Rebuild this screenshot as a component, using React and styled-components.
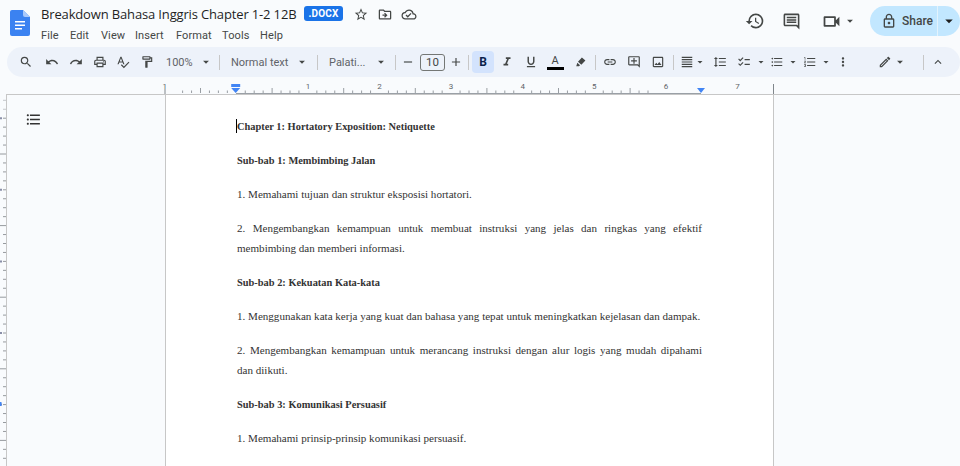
import React from 'react';
import styled, { createGlobalStyle } from 'styled-components';
import {
    MdSearch, MdUndo, MdRedo, MdOutlinePrint, MdOutlineSpellcheck, MdOutlineFormatPaint,
    MdOutlineStarBorder, MdOutlineDriveFileMove, MdOutlineCloudDone, MdHistory,
    MdOutlineVideocam, MdOutlineLock, MdFormatItalic, MdFormatUnderlined, MdOutlineLink,
    MdOutlineAddComment, MdOutlineImage, MdFormatAlignJustify, MdFormatLineSpacing,
    MdChecklist, MdFormatListBulleted, MdFormatListNumbered, MdMoreVert, MdOutlineEdit,
    MdExpandLess, MdArrowDropDown, MdAdd, MdRemove, MdOutlineComment,
} from 'react-icons/md';

const GlobalStyle = createGlobalStyle`
    html, body {
        margin: 0;
        height: 466px;
        overflow: hidden;
        background: #f9fbfd;
        font-family: Roboto, "Liberation Sans", sans-serif;
        color: #444746;
    }
`;

const Shell = styled.div`
    width: 960px;
    height: 466px;
    display: flex;
    flex-direction: column;
    overflow: hidden;
`;

const Header = styled.header`
    height: 47px;
    flex: none;
    display: flex;
    padding-left: 10px;
`;

const Logo = styled.svg`
    width: 20px;
    height: 26px;
    margin-top: 10px;
    flex: none;
`;

const TitleBlock = styled.div`
    margin-left: 11px;
    padding-top: 5px;
`;

const TitleRow = styled.div`
    display: flex;
    align-items: center;
    height: 19px;
`;

const Title = styled.div`
    font-family: "Open Sans", sans-serif;
    font-size: 13px;
    letter-spacing: -0.15px;
    margin-top: -1px;
    color: #1f1f1f;
    width: 263px;
    white-space: nowrap;
`;

const Badge = styled.div`
    width: 39px;
    height: 15px;
    margin-bottom: 2px;
    border-radius: 3px;
    background: #1a73e8;
    color: #fff;
    font-size: 10px;
    font-weight: 700;
    display: flex;
    align-items: center;
    justify-content: center;
    letter-spacing: 0.2px;
`;

const TitleIcons = styled.div`
    display: flex;
    margin-left: 6px;
    color: #444746;

    svg {
        width: 24px;
        height: 15px;
    }
`;

const MenuBar = styled.nav`
    display: flex;
    margin-top: 3px;
    height: 16px;
    align-items: center;
`;

const MenuItem = styled.span`
    font-size: 11px;
    color: #444746;
    width: ${({ $w }) => $w}px;
    letter-spacing: 0.1px;
`;

const Actions = styled.div`
    margin-left: auto;
    display: flex;
    align-items: flex-start;
    padding-top: 6px;
    color: #444746;
`;

const ActionIcon = styled.div`
    width: ${({ $w }) => $w || 24}px;
    height: 30px;
    margin-left: ${({ $gap }) => $gap || 0}px;
    display: flex;
    align-items: center;
    justify-content: center;
    font-size: ${({ $size }) => $size || 20}px;
`;

const ShareButton = styled.div`
    width: 90px;
    height: 30px;
    margin-left: 13px;
    border-radius: 15px;
    background: #c2e7ff;
    display: flex;
    align-items: center;
    color: #1f1f1f;
`;

const ShareMain = styled.div`
    width: 68px;
    height: 30px;
    display: flex;
    align-items: center;
    padding-left: 11px;
    box-sizing: border-box;
    border-right: 1px solid #e3f3fd;
    font-size: 12px;
    font-weight: 500;
    color: #444746;
    gap: 5px;

    svg {
        font-size: 16px;
    }
`;

const ShareCaret = styled.div`
    flex: 1;
    display: flex;
    justify-content: center;
    font-size: 18px;
`;

const Toolbar = styled.div`
    height: 30px;
    width: 953px;
    margin-left: 7px;
    border-radius: 15px;
    background: #edf2fa;
    display: flex;
    align-items: center;
    flex: none;
    color: #444746;
`;

const Tool = styled.div`
    width: ${({ $w }) => $w || 24}px;
    height: 22px;
    flex: none;
    margin-left: ${({ $gap }) => $gap || 0}px;
    display: flex;
    align-items: center;
    justify-content: center;
    font-size: ${({ $size }) => $size || 14}px;
    border-radius: 4px;
    background: ${({ $active }) => ($active ? '#d3e3fd' : 'transparent')};
    color: ${({ $active }) => ($active ? '#0b1f4b' : 'inherit')};
`;

const ToolText = styled.div`
    width: ${({ $w }) => $w}px;
    flex: none;
    margin-left: ${({ $gap }) => $gap || 0}px;
    font-size: 11px;
    color: #5f6368;
    white-space: nowrap;
`;

const Caret = styled(MdArrowDropDown)`
    flex: none;
    width: ${({ $w }) => $w || 14}px;
    height: 16px;
    margin-left: ${({ $gap }) => $gap || 0}px;
    color: #444746;
`;

const Divider = styled.div`
    width: 1px;
    height: 15px;
    flex: none;
    background: #c7c7c7;
    margin-left: ${({ $gap }) => $gap || 0}px;
`;

const BoldGlyph = styled.span`
    font-size: 12px;
    font-weight: 700;
`;

const SizeBox = styled.div`
    width: 25px;
    height: 17px;
    box-sizing: border-box;
    flex: none;
    border: 1px solid #747775;
    border-radius: 3px;
    font-size: 11.5px;
    display: flex;
    align-items: center;
    justify-content: center;
`;

const ColorA = styled.div`
    width: 24px;
    flex: none;
    display: flex;
    flex-direction: column;
    align-items: center;
    font-size: 11px;
    line-height: 12px;
    margin-left: ${({ $gap }) => $gap || 0}px;

    &::after {
        content: '';
        width: 17px;
        height: 3px;
        background: #000;
    }
`;

const RulerRow = styled.div`
    height: 17px;
    flex: none;
    padding-left: 160px;
    box-sizing: border-box;
`;

const RulerSvg = styled.svg`
    display: block;
`;

const Workspace = styled.div`
    flex: 1;
    min-height: 0;
    display: flex;
`;

const SideRuler = styled.svg`
    width: 6px;
    height: 372px;
    flex: none;
`;

const DocArea = styled.div`
    flex: 1;
    display: flex;
    border-top: 1px solid #c7c7c7;
    border-left: 1px solid #c7c7c7;
    min-height: 0;
`;

const OutlinePane = styled.div`
    width: 158px;
    flex: none;
    padding: 16px 0 0 18px;
    box-sizing: border-box;
    font-size: 17px;
    color: #333;
`;

const Page = styled.main`
    width: 609px;
    box-sizing: border-box;
    flex: none;
    background: #fff;
    border-left: 1px solid #c7c7c7;
    border-right: 1px solid #c7c7c7;
    padding: 21px 71px 0;
    overflow: hidden;
    font-family: "Liberation Serif", serif;
    color: #333;
`;

const Paragraph = styled.p`
    margin: 0 0 ${({ $bold }) => ($bold ? 13 : 14)}px;
    padding-top: ${({ $bold }) => ($bold ? 1 : 0)}px;
    line-height: 20px;
    font-size: ${({ $bold }) => ($bold ? '10.4px' : '11.07px')};
    font-weight: ${({ $bold }) => ($bold ? 700 : 400)};
    white-space: nowrap;
    position: relative;
`;

const FullLine = styled.span`
    display: block;
    white-space: normal;
    text-align: justify;
    text-align-last: justify;
`;

const TextCursor = styled.span`
    position: absolute;
    left: -1px;
    top: 3px;
    width: 1px;
    height: 14px;
    background: #000;
`;

const lines = [
    { bold: true, text: 'Chapter 1: Hortatory Exposition: Netiquette', cursor: true },
    { bold: true, text: 'Sub-bab 1: Membimbing Jalan' },
    { text: '1. Memahami tujuan dan struktur eksposisi hortatori.' },
    { full: '2. Mengembangkan kemampuan untuk membuat instruksi yang jelas dan ringkas yang efektif', text: 'membimbing dan memberi informasi.' },
    { bold: true, text: 'Sub-bab 2: Kekuatan Kata-kata' },
    { text: '1. Menggunakan kata kerja yang kuat dan bahasa yang tepat untuk meningkatkan kejelasan dan dampak.' },
    { full: '2. Mengembangkan kemampuan untuk merancang instruksi dengan alur logis yang mudah dipahami', text: 'dan diikuti.' },
    { bold: true, text: 'Sub-bab 3: Komunikasi Persuasif' },
    { text: '1. Memahami prinsip-prinsip komunikasi persuasif.' },
];

const menus = [['File', 29], ['Edit', 31], ['View', 34], ['Insert', 41], ['Format', 46], ['Tools', 38], ['Help', 30]];

function DocsLogo() {
    return (
        <Logo viewBox="0 0 20 26">
            <path d="M2 0h11l7 7v17a2 2 0 0 1-2 2H2a2 2 0 0 1-2-2V2a2 2 0 0 1 2-2z" fill="#3b82f1" />
            <path d="M13 0l7 7h-5a2 2 0 0 1-2-2z" fill="#a9c9fb" />
            <path d="M5 11h10v1.5H5zM5 14.5h10V16H5zM5 18h7v1.5H5z" fill="#fff" />
        </Logo>
    );
}

function TopRuler() {
    const inch = 71.6;
    const zero = 76.3;
    const ticks = [];
    for (let i = -6; i <= 46; i += 1) {
        const x = zero + (i * inch) / 8;
        if (x < 6 || x > 612 || i % 8 === 0) continue;
        ticks.push(<line key={i} x1={x} x2={x} y1={i % 4 === 0 ? 11 : 13.5} y2={16} stroke="#80868b" strokeWidth="0.8" />);
    }
    const labels = [[-1, '1'], [1, '1'], [2, '2'], [3, '3'], [4, '4'], [5, '5'], [6, '6'], [7, '7']];
    return (
        <RulerSvg width="800" height="17" viewBox="0 0 800 17">
            <line x1="5" x2="5" y1="12" y2="17" stroke="#80868b" />
            <line x1="613.5" x2="613.5" y1="7" y2="17" stroke="#80868b" />
            <line x1="76" x2="541" y1="16.5" y2="16.5" stroke="#9aa0a6" />
            {ticks}
            {labels.map(([n, t]) => (
                <text key={n} x={zero + n * inch} y="12" fontSize="8" fill="#5f6368" textAnchor="middle" fontFamily="Roboto, sans-serif">{t}</text>
            ))}
            <path d="M71.2 7h9v3h-9zM71.2 11h9L75.7 16z" fill="#4285f4" />
            <path d="M537 11h8L541 16z" fill="#4285f4" />
        </RulerSvg>
    );
}

function LeftRuler() {
    const ticks = [];
    for (let i = -6; i < 36; i += 1) {
        const y = 60 + i * 8.95;
        const major = i % 8 === 0;
        const half = i % 4 === 0;
        const stroke = y < 24 ? '#c4c7ca' : '#969a9e';
        ticks.push(<line key={i} x1={major ? 0 : 3} x2="6" y1={y} y2={y} stroke={stroke} strokeWidth="1" />);
        if (half && !major) {
            ticks.push(<line key={`m${i}`} x1="0" x2="2" y1={y} y2={y} stroke="#8a8fa8" strokeWidth="2" />);
        }
    }
    return (
        <SideRuler viewBox="0 0 6 372">
            {ticks}
            <path d="M0 308h1.5v4H0z" fill="#4285f4" />
        </SideRuler>
    );
}

function HighlightIcon() {
    return (
        <svg width="13" height="13" viewBox="0 0 14 14">
            <path d="M8.5 1.5l3.8 3.4-4.4 4.6-3.6-3.3z M3.6 7.3l2.9 2.7-1.2 1.1H2.4z" fill="#444746" />
        </svg>
    );
}

function App() {
    return (
        <Shell>
            <GlobalStyle />
            <Header>
                <DocsLogo />
                <TitleBlock>
                    <TitleRow>
                        <Title>Breakdown Bahasa Inggris Chapter 1-2 12B</Title>
                        <Badge>.DOCX</Badge>
                        <TitleIcons>
                            <MdOutlineStarBorder />
                            <MdOutlineDriveFileMove />
                            <MdOutlineCloudDone />
                        </TitleIcons>
                    </TitleRow>
                    <MenuBar>
                        {menus.map(([name, w]) => (
                            <MenuItem key={name} $w={w}>{name}</MenuItem>
                        ))}
                    </MenuBar>
                </TitleBlock>
                <Actions>
                    <ActionIcon $size={20}><MdHistory /></ActionIcon>
                    <ActionIcon $gap={12} $size={19}><MdOutlineComment /></ActionIcon>
                    <ActionIcon $gap={16} $size={21}><MdOutlineVideocam /></ActionIcon>
                    <ActionIcon $w={14} $size={16}><MdArrowDropDown /></ActionIcon>
                    <ShareButton>
                        <ShareMain><MdOutlineLock />Share</ShareMain>
                        <ShareCaret><MdArrowDropDown /></ShareCaret>
                    </ShareButton>
                </Actions>
            </Header>
            <Toolbar>
                <Tool $gap={7}><MdSearch /></Tool>
                <Tool $gap={2}><MdUndo /></Tool>
                <Tool><MdRedo /></Tool>
                <Tool><MdOutlinePrint /></Tool>
                <Tool $gap={-1}><MdOutlineSpellcheck /></Tool>
                <Tool><MdOutlineFormatPaint /></Tool>
                <ToolText $w={33} $gap={7}>100%</ToolText>
                <Caret />
                <Divider $gap={6} />
                <ToolText $w={64} $gap={11}>Normal text</ToolText>
                <Caret />
                <Divider $gap={8} />
                <ToolText $w={45} $gap={11}>Palati...</ToolText>
                <Caret />
                <Divider $gap={7} />
                <Tool $size={14}><MdRemove /></Tool>
                <SizeBox>10</SizeBox>
                <Tool $size={14} $w={22}><MdAdd /></Tool>
                <Divider $gap={1} />
                <Tool $gap={3} $w={22} $active><BoldGlyph>B</BoldGlyph></Tool>
                <Tool $gap={1}><MdFormatItalic /></Tool>
                <Tool><MdFormatUnderlined /></Tool>
                <ColorA>A</ColorA>
                <Tool $gap={1}><HighlightIcon /></Tool>
                <Divider $gap={3} />
                <Tool $gap={2}><MdOutlineLink /></Tool>
                <Tool><MdOutlineAddComment /></Tool>
                <Tool><MdOutlineImage /></Tool>
                <Divider $gap={3} />
                <Tool $gap={5} $w={16}><MdFormatAlignJustify /></Tool>
                <Caret $w={12} $gap={-1} />
                <Tool $gap={2}><MdFormatLineSpacing /></Tool>
                <Tool $gap={1} $w={22}><MdChecklist /></Tool>
                <Caret $w={12} />
                <Tool $w={20}><MdFormatListBulleted /></Tool>
                <Caret $w={12} />
                <Tool $gap={1} $w={20}><MdFormatListNumbered /></Tool>
                <Caret $w={12} />
                <Tool $w={22}><MdMoreVert /></Tool>
                <Tool $gap={23} $w={16}><MdOutlineEdit /></Tool>
                <Caret />
                <Divider $gap={16} />
                <Tool $gap={2}><MdExpandLess /></Tool>
            </Toolbar>
            <RulerRow><TopRuler /></RulerRow>
            <Workspace>
                <LeftRuler />
                <DocArea>
                    <OutlinePane><MdFormatListBulleted /></OutlinePane>
                    <Page>
                        {lines.map((line) => (
                            <Paragraph key={line.text} $bold={line.bold}>
                                {line.cursor && <TextCursor />}
                                {line.full && <FullLine>{line.full}</FullLine>}
                                {line.text}
                            </Paragraph>
                        ))}
                    </Page>
                </DocArea>
            </Workspace>
        </Shell>
    );
}

export default App;
